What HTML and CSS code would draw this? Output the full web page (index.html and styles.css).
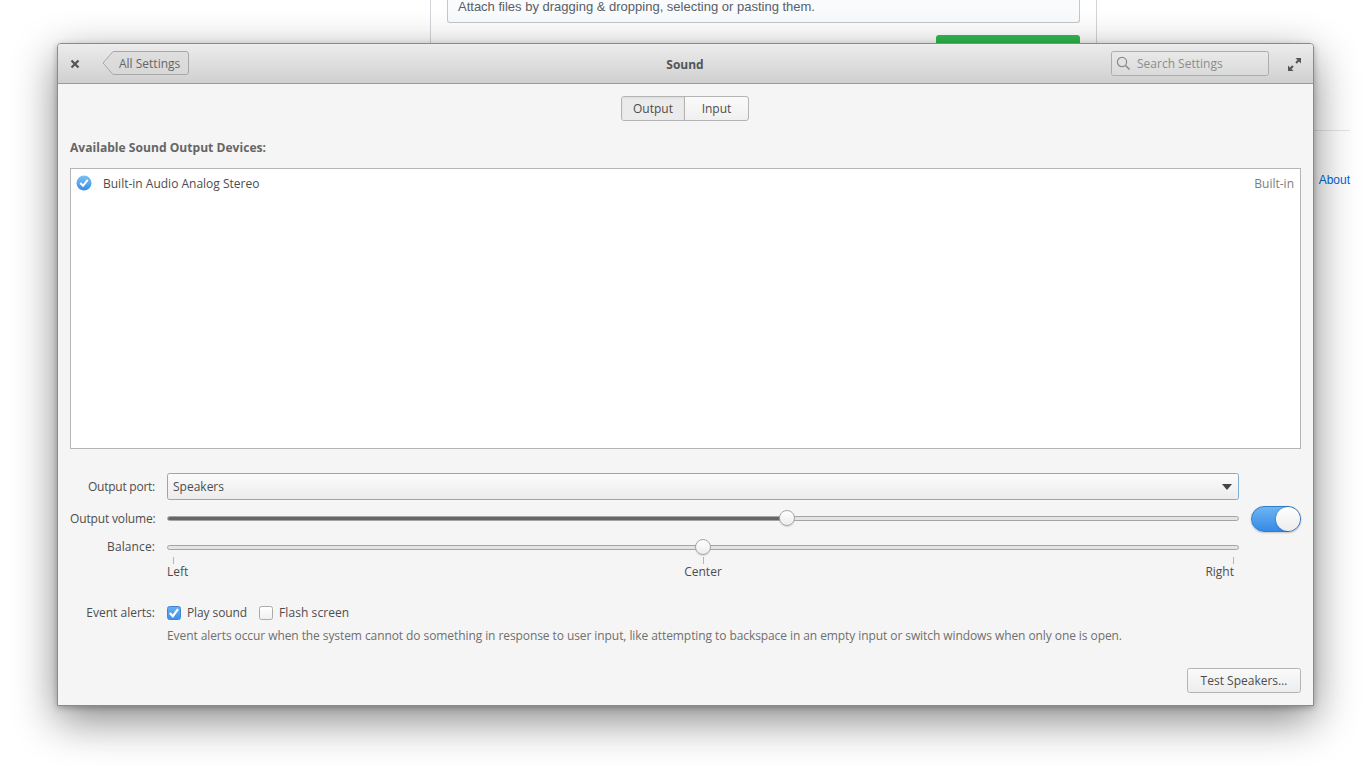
FILE: index.html
```html
<!DOCTYPE html>
<html lang="en">
<head>
  <meta charset="UTF-8">
  <meta name="viewport" content="width=device-width, initial-scale=1.0">
  <title>Sound</title>
  <link rel="stylesheet" href="styles.css">
</head>
<body>
  <!-- Browser page behind the window -->
  <div class="backdrop">
    <div class="page-card">
      <div class="attach-box">Attach files by dragging &amp; dropping, selecting or pasting them.</div>
      <div class="submit-row"><div class="submit-btn"></div></div>
    </div>
    <div class="page-side">
      <a class="about-link" href="#">About</a>
    </div>
  </div>

  <!-- Settings window -->
  <div class="window">
    <header class="titlebar">
      <div class="titlebar-left">
        <button class="icon-btn close-btn" aria-label="Close">
          <svg width="10" height="10" viewBox="0 0 10 10"><path d="M1.5 1.5l7 7M8.5 1.5l-7 7" stroke="#555" stroke-width="2.2"/></svg>
        </button>
        <button class="back-btn">
          <svg class="back-shape" width="88" height="25" viewBox="0 0 88 25"><path d="M11 .5H84a2.5 2.5 0 0 1 2.5 2.5v18a2.5 2.5 0 0 1-2.500 2.500H11L1 12z" fill="#d9d9d9" fill-opacity=".55" stroke="#a8a8a8"/></svg>
          <span class="back-label">All Settings</span>
        </button>
      </div>
      <div class="title">Sound</div>
      <div class="titlebar-right">
        <div class="search">
          <svg width="15" height="15" viewBox="0 0 15 15"><circle cx="6" cy="6" r="4.6" fill="none" stroke="#8a8a8a" stroke-width="1.2"/><path d="M9.5 9.5l4 4" stroke="#8a8a8a" stroke-width="1.6"/></svg>
          <span>Search Settings</span>
        </div>
        <button class="icon-btn expand-btn" aria-label="Maximize">
          <svg width="13" height="13" viewBox="0 0 13 13"><path d="M7.5 0H13V5.500L11 3.500 8.800 5.700 7.300 4.200 9.500 2zM5.500 13H0V7.500L2 9.500 4.200 7.300 5.700 8.800 3.500 11z" fill="#555"/></svg>
        </button>
      </div>
    </header>

    <main class="content">
      <div class="switcher-row">
        <div class="switcher">
          <div class="switch-item active">Output</div>
          <div class="switch-item">Input</div>
        </div>
      </div>

      <h4 class="section-title">Available Sound Output Devices:</h4>

      <div class="device-list">
        <div class="device">
          <svg width="16" height="16" viewBox="0 0 16 16">
            <defs><linearGradient id="checkFill" x1="0" y1="0" x2="0" y2="1"><stop offset="0" stop-color="#7cc0f7"/><stop offset="1" stop-color="#3a8de6"/></linearGradient></defs>
            <circle cx="8" cy="8" r="7.500" fill="url(#checkFill)"/><path d="M4.300 8l2.700 2.800 4.700-6" fill="none" stroke="#fff" stroke-width="2"/>
          </svg>
          <span class="device-name">Built-in Audio Analog Stereo</span>
          <span class="device-type">Built-in</span>
        </div>
      </div>

      <div class="controls">
        <label class="row-label port-label">Output port:</label>
        <div class="combo">
          <span>Speakers</span>
          <svg width="10" height="6" viewBox="0 0 10 6"><path d="M0 0h10L5 6z" fill="#444"/></svg>
        </div>
        <div></div>

        <label class="row-label vol-label">Output volume:</label>
        <div class="slider vol-slider">
          <div class="track"><div class="fill" style="width: 57.8%"></div></div>
          <div class="thumb" style="left: 57.8%"></div>
        </div>
        <div class="toggle"><div class="toggle-knob"></div></div>

        <label class="row-label bal-label">Balance:</label>
        <div class="bal-wrap">
          <div class="slider">
            <div class="track"></div>
            <div class="thumb" style="left: 50%"></div>
          </div>
          <div class="marks">
            <div class="mark mark-left"><i></i>Left</div>
            <div class="mark mark-center"><i></i>Center</div>
            <div class="mark mark-right"><i></i>Right</div>
          </div>
        </div>
        <div></div>

        <label class="row-label alert-label">Event alerts:</label>
        <div class="alerts">
          <div class="checks">
            <div class="check play-check">
              <span class="box on"><svg width="14" height="14" viewBox="0 0 14 14"><path d="M2.800 7l3 3.200 5.200-7" fill="none" stroke="#fff" stroke-width="2.200"/></svg></span>
              Play sound
            </div>
            <div class="check flash-check"><span class="box"></span>Flash screen</div>
          </div>
          <p class="hint">Event alerts occur when the system cannot do something in response to user input, like attempting to backspace in an empty input or switch windows when only one is open.</p>
        </div>
        <div></div>
      </div>

      <div class="footer">
        <button class="test-btn">Test Speakers…</button>
      </div>
    </main>
  </div>
</body>
</html>
```

FILE: styles.css
```css
html, body {
  margin: 0;
  height: 100%;
  overflow: hidden;
  background-color: #fff;
}
body {
  font-family: "Open Sans", "Noto Sans", sans-serif;
  font-size: 12px;
  color: #4d4d4d;
}
button {
  font: inherit;
  color: inherit;
  background: none;
  border: none;
  padding: 0;
}

/* Page behind the window */
.backdrop {
  display: flex;
  padding-left: 430px;
  font-family: "Liberation Sans", Arial, sans-serif;
  font-size: 13px;
}
.page-card {
  width: 667px;
  height: 300px;
  box-sizing: border-box;
  border-left: 1px solid #d1d5da;
  border-right: 1px solid #d1d5da;
  padding: 0 16px;
}
.attach-box {
  height: 23px;
  box-sizing: border-box;
  padding: 0 10px;
  line-height: 14px;
  background-color: #fafbfc;
  border: 1px solid #c3c8cf;
  border-top: none;
  border-radius: 0 0 3px 3px;
  color: #586069;
}
.submit-row {
  display: flex;
  justify-content: flex-end;
  margin-top: 12px;
}
.submit-btn {
  width: 144px;
  height: 34px;
  background-color: #30bb50;
  border-radius: 3px;
}
.page-side {
  width: 253px;
  height: 60px;
  margin-top: 130px;
  padding-top: 41px;
  border-top: 1px solid #e6e6e6;
  text-align: right;
}
.about-link {
  color: #0366d6;
  font-size: 12px;
  text-decoration: none;
}

/* Window */
.window {
  position: absolute;
  left: 57px;
  top: 43px;
  width: 1257px;
  height: 663px;
  box-sizing: border-box;
  display: flex;
  flex-direction: column;
  background-color: #f5f5f5;
  border: 1px solid #8b8b8b;
  border-radius: 4px 4px 0 0;
  box-shadow: 0 14px 44px rgba(0, 0, 0, 0.48), 0 2px 6px rgba(0, 0, 0, 0.25);
}
.titlebar {
  display: grid;
  grid-template-columns: 1fr auto 1fr;
  align-items: center;
  height: 40px;
  box-sizing: border-box;
  flex-shrink: 0;
  background: linear-gradient(#ececec, #d0d0d0);
  border-bottom: 1px solid #9a9a9a;
  border-radius: 3px 3px 0 0;
}
.titlebar-left {
  display: flex;
  align-items: center;
  padding-left: 12px;
}
.icon-btn {
  display: flex;
  align-items: center;
  justify-content: center;
  width: 10px;
  height: 10px;
}
.close-btn {
  margin-top: 1px;
}
.back-btn {
  position: relative;
  width: 88px;
  height: 25px;
  margin-left: 22px;
  text-align: left;
}
.back-shape {
  position: absolute;
  left: 0;
  top: 0;
}
.back-label {
  position: relative;
  padding-left: 17px;
  color: #666;
  line-height: 24px;
}
.title {
  font-weight: 700;
  color: #555;
  padding: 1px 1px 0 0;
}
.titlebar-right {
  display: flex;
  align-items: center;
  justify-content: flex-end;
  padding-right: 12px;
}
.search {
  display: flex;
  align-items: center;
  gap: 6px;
  width: 158px;
  height: 25px;
  box-sizing: border-box;
  padding-left: 4px;
  background-color: rgba(255, 255, 255, 0.12);
  border: 1px solid #adadad;
  border-radius: 2.500px;
  color: #8c8c8c;
}
.expand-btn {
  width: 13px;
  height: 13px;
  margin: 2px 0 0 19px;
}

/* Content */
.content {
  flex: 1;
  padding: 12px;
  display: flex;
  flex-direction: column;
}
.switcher-row {
  display: flex;
  justify-content: center;
  padding-right: 1px;
}
.switcher {
  display: flex;
  height: 25px;
  box-sizing: border-box;
  background: linear-gradient(#fafafa, #f0f0f0);
  border: 1px solid #b4b4b4;
  border-radius: 3px;
}
.switch-item {
  width: 63px;
  line-height: 23px;
  text-align: center;
}
.switch-item.active {
  width: 62px;
  background-color: #ebebeb;
  border-right: 1px solid #b4b4b4;
  border-radius: 2px 0 0 2px;
  box-shadow: inset 0 1px 2px rgba(0, 0, 0, 0.08);
}
.section-title {
  margin: 18px 0 11px;
  font-size: 12.100px;
  line-height: 18px;
  font-weight: 700;
  color: #666;
}
.device-list {
  height: 281px;
  box-sizing: border-box;
  flex-shrink: 0;
  background-color: #fff;
  border: 1px solid #b5b5b5;
}
.device {
  display: flex;
  align-items: center;
  height: 28px;
  padding: 0 6px 0 5px;
}
.device-name {
  margin-left: 11px;
  flex: 1;
}
.device-type {
  color: #7d7d7d;
}

/* Settings rows */
.controls {
  display: grid;
  grid-template-columns: 85px 1fr 50px;
  column-gap: 12px;
  margin-top: 24px;
}
.row-label {
  text-align: right;
}
.port-label {
  line-height: 27px;
  letter-spacing: -0.25px;
}
.combo {
  display: flex;
  align-items: center;
  justify-content: space-between;
  height: 27px;
  box-sizing: border-box;
  padding: 0 6px 0 5px;
  background: linear-gradient(#fbfbfb, #ececec);
  border: 1px solid #7fabd4;
  border-radius: 2.500px;
}
.vol-label {
  margin-top: 10px;
  line-height: 18px;
  letter-spacing: -0.15px;
  white-space: nowrap;
}
.bal-label {
  margin-top: 6px;
  line-height: 18px;
  letter-spacing: 0.1px;
}
.slider {
  position: relative;
  height: 16px;
  display: flex;
  align-items: center;
}
.vol-slider {
  margin-top: 10px;
}
.track {
  flex: 1;
  height: 5px;
  box-sizing: border-box;
  background-color: #e4e4e4;
  border: 1px solid #a4a4a4;
  border-radius: 3px;
  overflow: hidden;
}
.fill {
  height: 100%;
  background-color: #666;
}
.thumb {
  position: absolute;
  top: 0;
  width: 16px;
  height: 16px;
  box-sizing: border-box;
  margin-left: -8px;
  background: linear-gradient(#fff, #ececec);
  border: 1px solid #a6a6a6;
  border-radius: 50%;
  box-shadow: 0 1px 1px rgba(0, 0, 0, 0.12);
}
.toggle {
  width: 50px;
  height: 26px;
  box-sizing: border-box;
  margin-top: 6px;
  display: flex;
  justify-content: flex-end;
  background: linear-gradient(#6db4f2, #3689e6);
  border: 1px solid #2f7ecb;
  border-radius: 13px;
  box-shadow: 0 1px 2px rgba(0, 0, 0, 0.2);
}
.toggle-knob {
  width: 24px;
  height: 24px;
  background: linear-gradient(#fff, #ececec);
  border-radius: 50%;
  box-shadow: 0 0 2px rgba(0, 0, 0, 0.4);
}
.bal-wrap {
  margin-top: 7px;
}
.marks {
  display: grid;
  grid-template-columns: 1fr auto 1fr;
  margin-top: 2px;
}
.mark {
  display: flex;
  flex-direction: column;
  line-height: 16px;
}
.mark i {
  width: 1px;
  height: 7px;
  background-color: #b5b5b5;
}
.mark-left i {
  margin-left: 6px;
}
.mark-center {
  align-items: center;
}
.mark-center i {
  margin-left: 1px;
}
.mark-right {
  align-items: flex-end;
  padding-right: 5px;
}
.alert-label {
  margin-top: 24px;
  line-height: 18px;
}
.alerts {
  margin-top: 24px;
}
.checks {
  display: flex;
  gap: 12px;
  line-height: 18px;
}
.check {
  display: flex;
  align-items: center;
  gap: 6px;
}
.play-check {
  letter-spacing: -0.1px;
}
.flash-check {
  letter-spacing: 0.08px;
}
.box {
  display: flex;
  width: 14px;
  height: 14px;
  box-sizing: border-box;
  background: linear-gradient(#fff, #f0f0f0);
  border: 1px solid #ababab;
  border-radius: 2.500px;
}
.box.on {
  background: linear-gradient(#65aef0, #3f92ea);
  border-color: #3f85cf;
}
.box.on svg {
  margin: -1px;
}
.hint {
  margin: 5px 0 0;
  line-height: 18px;
  letter-spacing: -0.081px;
  color: #6f6f6f;
  white-space: nowrap;
}

.footer {
  margin-top: auto;
  display: flex;
  justify-content: flex-end;
}
.test-btn {
  width: 114px;
  height: 25px;
  box-sizing: border-box;
  background: linear-gradient(#fafafa, #ededed);
  border: 1px solid #b4b4b4;
  border-radius: 2.500px;
}
```
